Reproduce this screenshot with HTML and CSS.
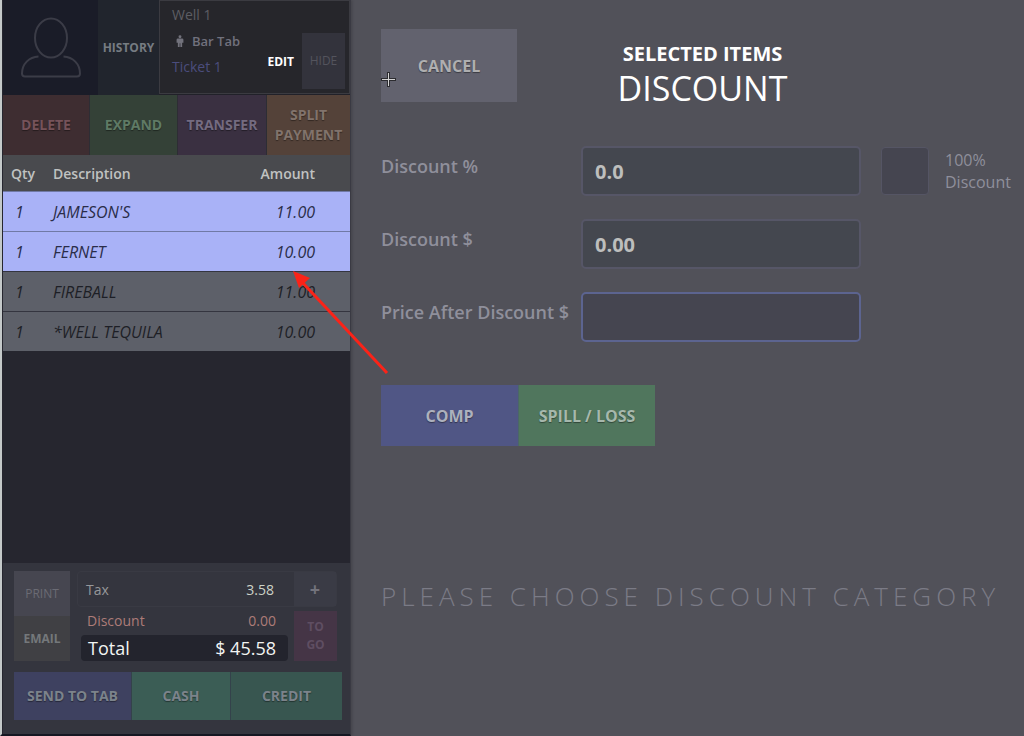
FILE: index.html
```
<!DOCTYPE html>
<html lang="en">
<head>
    <meta charset="UTF-8">
    <meta name="viewport" content="width=device-width, initial-scale=1.0">
    <title>Discount</title>
    <link rel="stylesheet" href="styles.css">
</head>
<body>
    <aside class="sidebar">
        <div class="ticket-top">
            <div class="avatar">
                <svg width="60" height="62" viewBox="0 0 60 62" fill="none" stroke="#3b3c47" stroke-width="2">
                    <ellipse cx="30" cy="21" rx="16" ry="19.5"/>
                    <path d="M17.5 39.500C8 40 1 47 1 56.500Q1 59.500 4 59.500H56Q59 59.500 59 56.500C59 47 52 40 42.500 39.500"/>
                </svg>
            </div>
            <button class="history-button">HISTORY</button>
            <div class="ticket-info">
                <div class="ticket-names">
                    <div class="ticket-well">Well 1</div>
                    <div class="ticket-tab">
                        <svg width="8" height="12" viewBox="0 0 8 14" fill="#72727c">
                            <circle cx="4" cy="2" r="1.700"/>
                            <path d="M1.500 4h5Q8 4 8 5.500V9H6.500V14H4.400V9.500H3.600V14H1.500V9H0V5.500Q0 4 1.500 4z"/>
                        </svg>
                        Bar Tab
                    </div>
                    <a class="ticket-link" href="#">Ticket 1</a>
                </div>
                <button class="edit-button">EDIT</button>
                <button class="hide-button">HIDE</button>
            </div>
        </div>

        <div class="actions">
            <button class="delete">DELETE</button>
            <button class="expand">EXPAND</button>
            <button class="transfer">TRANSFER</button>
            <button class="split">SPLIT PAYMENT</button>
        </div>

        <table class="items">
            <thead>
                <tr><th class="qty">Qty</th><th>Description</th><th class="amount">Amount</th></tr>
            </thead>
            <tbody>
                <tr class="selected"><td class="qty">1</td><td>JAMESON'S</td><td class="amount">11.00</td></tr>
                <tr class="selected"><td class="qty">1</td><td>FERNET</td><td class="amount">10.00</td></tr>
                <tr><td class="qty">1</td><td>FIREBALL</td><td class="amount">11.00</td></tr>
                <tr><td class="qty">1</td><td>*WELL TEQUILA</td><td class="amount">10.00</td></tr>
            </tbody>
        </table>

        <div class="summary">
            <div class="summary-top">
                <div class="receipt">
                    <button class="print">PRINT</button>
                    <button class="email">EMAIL</button>
                </div>
                <div class="totals">
                    <div class="tax-row">
                        <span>Tax</span>
                        <span class="tax-value">3.58</span>
                        <button class="plus" aria-label="Add tax">+</button>
                    </div>
                    <div class="totals-bottom">
                        <div class="totals-lines">
                            <div class="discount-line"><span>Discount</span><span>0.00</span></div>
                            <div class="total-line"><span>Total</span><span>$ 45.58</span></div>
                        </div>
                        <button class="to-go">TO GO</button>
                    </div>
                </div>
            </div>
            <div class="pay">
                <button class="send">SEND TO TAB</button>
                <button class="cash">CASH</button>
                <button class="credit">CREDIT</button>
            </div>
        </div>
    </aside>

    <main class="main">
        <header class="main-header">
            <button class="cancel-button">CANCEL</button>
            <h1 class="title"><span>SELECTED ITEMS</span>DISCOUNT</h1>
        </header>

        <form class="discount-form">
            <label for="percent">Discount %</label>
            <input type="text" id="percent" value="0.0">
            <div class="full-discount">
                <input type="checkbox" id="full">
                <label for="full">100% Discount</label>
            </div>

            <label for="dollars">Discount $</label>
            <input type="text" id="dollars" value="0.00">

            <label for="price">Price After Discount $</label>
            <input type="text" id="price" class="active">
        </form>

        <div class="categories">
            <button class="comp">COMP</button>
            <button class="spill">SPILL / LOSS</button>
        </div>

        <p class="hint">PLEASE CHOOSE DISCOUNT CATEGORY</p>
    </main>

    <svg class="pointer" width="15" height="15" viewBox="0 0 15 15">
        <path d="M7.500 0V15M0 7.500H15" stroke="#2c2c30" stroke-width="3"/>
        <path d="M7.500 1V14M1 7.500H14" stroke="#d4d4d4" stroke-width="1"/>
    </svg>
    <svg class="arrow" width="98" height="106" viewBox="0 0 98 106">
        <path d="M10 12L95 103" stroke="#fb2318" stroke-width="3"/>
        <path d="M1 1L18 8L7 18z" fill="#fb2318"/>
    </svg>
</body>
</html>
```
FILE: styles.css
```
* {
    box-sizing: border-box;
}

body {
    margin: 0;
    min-height: 100vh;
    display: flex;
    position: relative;
    background-color: #515159;
    font-family: "Open Sans", sans-serif;
    font-size: 16px;
}

button {
    border: none;
    padding: 0;
    margin: 0;
    font-family: inherit;
    font-size: 14px;
    font-weight: 700;
    line-height: 20px;
    cursor: pointer;
}

/* Ticket sidebar */
.sidebar {
    flex: 0 0 351px;
    display: flex;
    flex-direction: column;
    background-color: #26262f;
    border-left: 2px solid #c4c9c9;
    border-right: 1px solid #3a3a43;
    border-bottom: 2px solid #151722;
    padding-left: 1px;
    box-shadow: 1px 0 3px rgba(0, 0, 0, 0.2);
}

.ticket-top {
    display: flex;
    height: 95px;
    background-color: #212129;
}

.avatar {
    width: 95px;
    background-color: #1a1c28;
    display: flex;
    align-items: center;
    justify-content: center;
}

.history-button {
    width: 61px;
    background-color: #21252d;
    color: #767c82;
    font-size: 12px;
}

.ticket-info {
    flex: 1;
    display: flex;
    align-items: flex-end;
    background-color: #26262b;
    border: 1px solid #3b3b41;
    padding: 0 4px 4px 12px;
    margin-bottom: 1px;
}

.ticket-names {
    flex: 1;
    align-self: flex-start;
    padding-top: 1px;
    font-size: 14px;
    line-height: 26px;
    color: #5d5d63;
}

.ticket-tab {
    display: flex;
    align-items: center;
    gap: 8px;
    padding-left: 4px;
    font-weight: 600;
    font-size: 13px;
    color: #71717d;
}

.ticket-link {
    color: #4b4d7d;
    text-decoration: none;
}

.edit-button {
    background: none;
    color: #fff;
    font-size: 12px;
    margin-right: 8px;
    height: 54px;
}

.hide-button {
    width: 43px;
    height: 56px;
    background-color: #33333c;
    color: #54545d;
    font-size: 12px;
    font-weight: 400;
}

.actions {
    display: grid;
    grid-template-columns: 87px 88px 89px 1fr;
    height: 60px;
}

.actions button {
    border-right: 1px solid #2d2d34;
    text-shadow: 0 1px 1px rgba(0, 0, 0, 0.4);
}

.actions .delete {
    background-color: #3e2d31;
    color: #76535a;
}

.actions .expand {
    background-color: #344137;
    color: #5f7a65;
}

.actions .transfer {
    background-color: #3a3041;
    color: #746b80;
}

.actions .split {
    background-color: #544239;
    color: #81736c;
    border-right: none;
}

.items {
    width: 100%;
    border-collapse: collapse;
}

.items th {
    height: 36px;
    padding: 2px 0 0;
    background-color: #494a4e;
    color: #c0c2c1;
    font-size: 14px;
    font-weight: 600;
    text-align: left;
}

.items td {
    height: 40px;
    padding: 2px 0 0;
    background-color: #5d6069;
    border-top: 1px solid #34353f;
    color: #1d1f26;
    font-size: 16px;
    font-style: italic;
}

.items .selected td {
    background-color: #a9b2f7;
    border-top-color: #7079a5;
    color: #2a2d49;
}

.items .qty {
    width: 50px;
    padding-left: 8px;
}

.items td.qty {
    padding-left: 12px;
}

.items .amount {
    text-align: right;
    padding-right: 35px;
}

.summary {
    margin-top: auto;
    background-color: #34353e;
    padding: 8px 8px 14px 11px;
}

.summary-top {
    display: flex;
    gap: 7px;
    margin-bottom: 11px;
    padding-right: 5px;
}

.receipt {
    width: 56px;
    display: flex;
    flex-direction: column;
}

.receipt button {
    flex: 1;
    font-size: 12px;
}

.receipt .print {
    background-color: #464650;
    color: #6b6b74;
    font-weight: 400;
}

.receipt .email {
    background-color: #404044;
    color: #74787b;
}

.totals {
    flex: 1;
}

.tax-row {
    display: flex;
    align-items: center;
    height: 36px;
    padding-left: 8px;
    border: 1px solid #393a43;
    border-radius: 4px;
    font-size: 14px;
    color: #96979a;
}

.tax-value {
    margin-left: auto;
    margin-right: 20px;
    color: #ccd2c7;
}

.tax-row .plus {
    width: 42px;
    height: 34px;
    background-color: #3a3b45;
    color: #73737c;
    font-size: 18px;
}

.totals-bottom {
    display: flex;
    gap: 6px;
    margin-top: 4px;
    padding-left: 4px;
}

.totals-lines {
    flex: 1;
}

.discount-line {
    display: flex;
    justify-content: space-between;
    padding: 0 12px 0 6px;
    font-size: 14px;
    line-height: 20px;
    color: #ad7c78;
}

.total-line {
    display: flex;
    justify-content: space-between;
    margin-top: 4px;
    padding: 0 12px 0 7px;
    background-color: #23242d;
    border-radius: 4px;
    font-size: 18px;
    line-height: 26px;
    color: #f2f4f2;
}

.to-go {
    width: 43px;
    height: 50px;
    padding: 0 8px;
    background-color: #453546;
    color: #5f4e62;
    font-size: 12px;
    line-height: 18px;
}

.pay {
    display: grid;
    grid-template-columns: 118px 99px 1fr;
    height: 48px;
}

.pay button {
    color: #7c838b;
    border-right: 1px solid #34424b;
    text-shadow: 0 1px 1px rgba(0, 0, 0, 0.4);
}

.pay .send {
    background-color: #3e4160;
}

.pay .cash {
    background-color: #3b5d55;
}

.pay .credit {
    background-color: #385650;
    border-right: none;
}

/* Discount panel */
.main {
    flex: 1;
    padding: 29px 0 0 30px;
}

.main-header {
    display: grid;
    grid-template-columns: 136px 1fr 136px;
    grid-template-rows: 73px;
}

.cancel-button {
    background-color: #62626e;
    color: #afafb0;
    font-size: 16px;
    text-shadow: 0 1px 1px rgba(0, 0, 0, 0.4);
}

.title {
    margin: 0;
    padding-top: 12px;
    text-align: center;
    font-size: 34px;
    font-weight: 400;
    line-height: 42px;
    color: #fff;
}

.title span {
    display: block;
    font-size: 20px;
    font-weight: 700;
    line-height: 26px;
}

.discount-form {
    display: grid;
    grid-template-columns: 200px 1fr 163px;
    row-gap: 23px;
    margin-top: 44px;
    font-size: 18px;
    font-weight: 600;
    color: #8f8f9b;
}

.discount-form > label {
    grid-column: 1;
    padding-top: 7px;
    line-height: 26px;
}

.discount-form input[type="text"] {
    width: 100%;
    height: 50px;
    padding: 0 12px;
    background-color: #44474f;
    border: 2px solid #565667;
    border-radius: 5px;
    outline: none;
    font-family: inherit;
    font-size: 20px;
    font-weight: 700;
    color: #bdbebd;
}

.discount-form input[type="text"].active {
    background-color: #454550;
    border-color: #5c6490;
}

.full-discount {
    display: flex;
    align-items: center;
    gap: 16px;
    padding-left: 20px;
    font-size: 16px;
    font-weight: 400;
    line-height: 22px;
}

.full-discount label {
    width: 66px;
}

.full-discount input {
    appearance: none;
    flex: 0 0 48px;
    height: 48px;
    margin: 0;
    background-color: #454550;
    border: 1px solid #555564;
    border-radius: 4px;
}

.categories {
    display: flex;
    margin-top: 43px;
}

.categories button {
    width: 137px;
    height: 61px;
    font-size: 16px;
    text-shadow: 0 1px 1px rgba(0, 0, 0, 0.4);
}

.categories .comp {
    background-color: #505685;
    color: #adb1bd;
}

.categories .spill {
    background-color: #50765d;
    color: #a6b8ac;
    border-left: 1px solid #4b6668;
}

.hint {
    margin: 133px 0 0;
    font-size: 26px;
    font-weight: 300;
    line-height: 34px;
    letter-spacing: 5px;
    white-space: nowrap;
    color: #7b7b86;
}

/* Overlays */
.pointer {
    position: absolute;
    left: 381px;
    top: 72px;
}

.arrow {
    position: absolute;
    left: 292px;
    top: 270px;
}
```
